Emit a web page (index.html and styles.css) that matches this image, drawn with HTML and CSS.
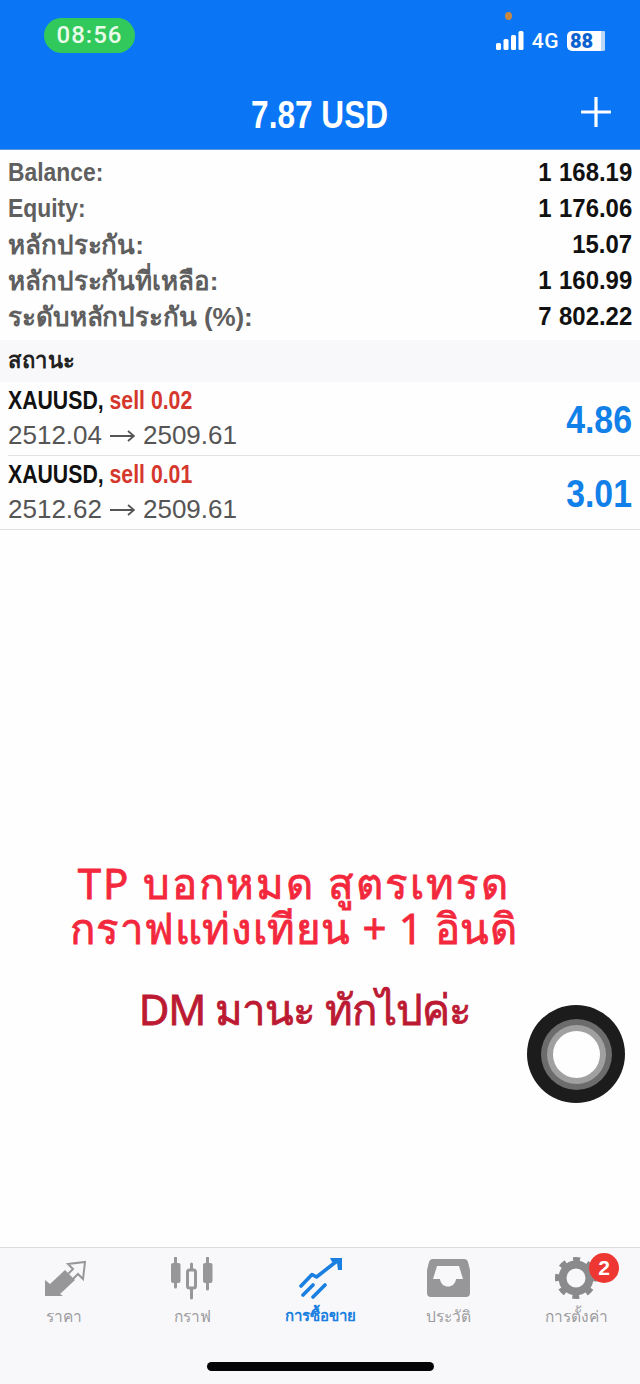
FILE: index.html
```html
<!DOCTYPE html>
<html>

<head>
  <meta charset="utf-8">
  <link rel="stylesheet" href="styles.css">
</head>

<body>
  <div class="screen">
    <header class="top">
      <div class="status">
        <span class="clock">08:56</span>
        <div class="status-right">
          <svg class="signal" viewBox="0 0 28 19">
            <rect x="0" y="12" width="5" height="7" rx="1.5" />
            <rect x="7.5" y="8" width="5" height="11" rx="1.5" />
            <rect x="15" y="4" width="5" height="15" rx="1.5" />
            <rect x="22.5" y="0" width="5" height="19" rx="1.5" />
          </svg>
          <span class="net">4G</span>
          <span class="battery">88</span>
        </div>
      </div>
      <span class="cam-dot"></span>
      <div class="title-row">
        <h1 class="title">7.87 USD</h1>
        <svg class="plus" viewBox="0 0 30 30">
          <path d="M15 1V29M1 15H29" />
        </svg>
      </div>
    </header>

    <section class="account">
      <div class="acc-row"><span class="acc-label">Balance:</span><span class="acc-value">1 168.19</span></div>
      <div class="acc-row"><span class="acc-label">Equity:</span><span class="acc-value">1 176.06</span></div>
      <div class="acc-row"><span class="acc-thai">หลักประกัน:</span><span class="acc-value">15.07</span></div>
      <div class="acc-row"><span class="acc-thai">หลักประกันที่เหลือ:</span><span class="acc-value">1 160.99</span></div>
      <div class="acc-row"><span class="acc-thai">ระดับหลักประกัน (%):</span><span class="acc-value">7 802.22</span></div>
    </section>

    <div class="section-head">สถานะ</div>

    <section class="trades">
      <div class="trade">
        <div class="trade-info">
          <div class="trade-name">XAUUSD, <span class="sell">sell 0.02</span></div>
          <div class="trade-price">2512.04
            <svg class="arrow" viewBox="0 0 25 12"><path d="M0 6H24M18 1L24 6L18 11" /></svg>
            2509.61</div>
        </div>
        <div class="profit">4.86</div>
      </div>
      <div class="trade">
        <div class="trade-info">
          <div class="trade-name">XAUUSD, <span class="sell">sell 0.01</span></div>
          <div class="trade-price">2512.62
            <svg class="arrow" viewBox="0 0 25 12"><path d="M0 6H24M18 1L24 6L18 11" /></svg>
            2509.61</div>
        </div>
        <div class="profit">3.01</div>
      </div>
    </section>

    <main class="blank">
      <p class="promo promo-one">TP บอกหมด สูตรเทรด</p>
      <p class="promo promo-two">กราฟแท่งเทียน + 1 อินดิ</p>
      <p class="promo promo-dm">DM มานะ ทักไปค่ะ</p>
      <div class="assist"><span class="assist-core"></span></div>
    </main>

    <nav class="tabs">
      <div class="tab">
        <svg class="tab-icon" viewBox="0 0 48 44">
          <path class="solid" d="M5 39L5 23L10 27L25 13L35 23L20 37L23 39Z" />
          <path class="line" d="M22 33L38 17L43 22L45 5L28 7L33 12L17 28" />
        </svg>
        <span class="tab-label">ราคา</span>
      </div>
      <div class="tab">
        <svg class="tab-icon" viewBox="0 0 48 44">
          <path class="wick" d="M7.5 1V30M23.5 7V41M39.5 1V32" />
          <rect class="solid" x="3" y="6" width="9.5" height="20" rx="2" />
          <rect class="solid" x="35" y="6" width="9.5" height="20" rx="2" />
          <rect class="hollow" x="19.5" y="13" width="8" height="18" rx="2" />
        </svg>
        <span class="tab-label">กราฟ</span>
      </div>
      <div class="tab tab-active">
        <svg class="tab-icon" viewBox="0 0 48 44">
          <path class="blue" d="M5 29L16 17.5L20.5 20L41 4M7 38L17 28M17 40L29 28" />
          <path class="blue-fill" d="M34 1H46V13L42 13L41 6L36 5Z" />
        </svg>
        <span class="tab-label">การซื้อขาย</span>
      </div>
      <div class="tab">
        <svg class="tab-icon" viewBox="0 0 48 44">
          <path class="solid" d="M9 2H40Q43 2 44 5L46 13V36Q46 40 42 40H7Q3 40 3 36V13L5 5Q6 2 9 2ZM13 9L9 22H16C17 32 31 32 32 22H39L35 9Z" fill-rule="evenodd" />
        </svg>
        <span class="tab-label">ประวัติ</span>
      </div>
      <div class="tab">
        <svg class="tab-icon" viewBox="0 0 48 44">
          <circle class="gear" cx="24" cy="21" r="13.5" />
          <circle class="gear-teeth" cx="24" cy="21" r="18.5" />
        </svg>
        <span class="tab-label">การตั้งค่า</span>
        <span class="badge">2</span>
      </div>
      <span class="home-bar"></span>
    </nav>
  </div>
</body>

</html>
```

FILE: styles.css
```css
* {
  margin: 0;
  padding: 0;
  box-sizing: border-box;
}

body {
  background: #fefefe;
  font-family: "Liberation Sans", "Noto Sans", sans-serif;
  overflow: hidden;
}

.screen {
  position: relative;
  width: 640px;
  height: 1384px;
  display: flex;
  flex-direction: column;
}

.top {
  position: relative;
  height: 150px;
  background: #0a76f6;
  border-bottom: 1px solid #5b97dc;
  color: #fff;
  display: flex;
  flex-direction: column;
}

.status {
  display: flex;
  justify-content: space-between;
  align-items: center;
  padding: 18px 32px 0 44px;
}

.clock {
  width: 91px;
  height: 35px;
  border-radius: 18px;
  background: #32c95c;
  color: #e9fbe9;
  font-family: "Roboto", sans-serif;
  font-size: 24px;
  font-weight: 500;
  letter-spacing: 1px;
  text-align: center;
  line-height: 35px;
}

.status-right {
  display: flex;
  align-items: center;
  gap: 8px;
  margin-top: 10px;
}

.signal {
  width: 28px;
  height: 19px;
  fill: #fff;
}

.net {
  font-family: "Roboto", sans-serif;
  font-size: 21px;
  font-weight: 500;
  letter-spacing: .5px;
}

.battery {
  width: 41px;
  height: 20px;
  border-radius: 5px;
  background: linear-gradient(90deg, #fbfdff 82%, #bcd6f5 82%, #bcd6f5 92%, transparent 92%);
  color: #0a62d0;
  font-family: "Roboto", sans-serif;
  font-size: 20px;
  font-weight: 900;
  padding-left: 3px;
  line-height: 20px;
}

.cam-dot {
  position: absolute;
  left: 505px;
  top: 12px;
  width: 7px;
  height: 8px;
  border-radius: 50%;
  background: #c8873f;
}

.title-row {
  position: relative;
  flex: 1;
  display: flex;
  justify-content: center;
  align-items: center;
  padding-top: 27px;
}

.title {
  font-size: 39px;
  font-weight: 700;
  white-space: nowrap;
  transform: scaleX(.81);
}

.plus {
  position: absolute;
  right: 28px;
  top: 43px;
  width: 32px;
  height: 32px;
  fill: none;
  stroke: #fff;
  stroke-width: 3;
}

.account {
  height: 190px;
  padding: 4px 8px 0;
  background: #fefefe;
}

.acc-row {
  height: 36px;
  display: flex;
  justify-content: space-between;
  align-items: center;
  font-size: 26px;
  font-weight: 700;
}

.acc-label {
  color: #5f5f5f;
  transform: scaleX(.88);
  transform-origin: left center;
}

.acc-thai {
  color: #5f5f5f;
  letter-spacing: -.1px;
}

.acc-value {
  color: #111;
  word-spacing: 1px;
  transform: scaleX(.92);
  transform-origin: right center;
}

.section-head {
  height: 42px;
  padding: 0 8px;
  background: #f8f8fa;
  color: #222;
  font-size: 22px;
  font-weight: 700;
  letter-spacing: .5px;
  line-height: 42px;
}

.trade {
  height: 74px;
  margin-left: 8px;
  padding-right: 8px;
  border-bottom: 1px solid #e2e2e4;
  display: flex;
  justify-content: space-between;
  align-items: center;
}

.trade:last-child {
  margin-left: 0;
  padding-left: 8px;
}

.trade-name {
  color: #111;
  font-size: 25px;
  font-weight: 700;
  white-space: nowrap;
  transform: scaleX(.85);
  transform-origin: left center;
}

.sell {
  color: #d5372d;
}

.trade-price {
  display: flex;
  align-items: center;
  gap: 8px;
  margin-top: 5px;
  color: #555;
  font-size: 26px;
}

.arrow {
  width: 25px;
  height: 12px;
  fill: none;
  stroke: #555;
  stroke-width: 1.8;
}

.profit {
  padding-top: 4px;
  color: #1180e8;
  font-size: 38px;
  font-weight: 700;
  transform: scaleX(.89);
  transform-origin: right center;
}

.blank {
  position: relative;
  flex: 1;
  display: flex;
  flex-direction: column;
  align-items: center;
  padding: 330px 52px 0 0;
  font-family: "Noto Sans", sans-serif;
}

.promo {
  color: #f3283c;
  font-size: 42px;
  line-height: 45px;
  text-align: center;
  white-space: nowrap;
  -webkit-text-stroke: .8px currentColor;
}

.promo-one {
  letter-spacing: 2px;
}

.promo-two {
  letter-spacing: .6px;
}

.promo-dm {
  margin: 36px 0 0 22px;
  color: #bc1a33;
  letter-spacing: -1px;
}

.assist {
  position: absolute;
  left: 527px;
  top: 475px;
  width: 98px;
  height: 98px;
  border-radius: 50%;
  background: #1c1c1c;
  display: flex;
  justify-content: center;
  align-items: center;
}

.assist-core {
  width: 47px;
  height: 47px;
  border-radius: 50%;
  background: #fefefe;
  box-shadow: 0 0 0 6px #a0a0a0, 0 0 0 12px #6c6c6c;
}

.tabs {
  position: relative;
  height: 137px;
  background: #f8f8fa;
  border-top: 1px solid #dcdcde;
  display: grid;
  grid-template-columns: repeat(5, 128px);
  align-content: start;
  padding-top: 9px;
}

.tab {
  position: relative;
  display: flex;
  flex-direction: column;
  align-items: center;
  gap: 3px;
  color: #9c9c9e;
  font-size: 15.5px;
}

.tab-active {
  color: #1a7fe0;
  font-weight: 700;
  font-size: 15px;
}

.tab-icon {
  width: 48px;
  height: 44px;
}

.solid {
  fill: #979799;
}

.line {
  fill: none;
  stroke: #979799;
  stroke-width: 2;
}

.wick {
  fill: none;
  stroke: #979799;
  stroke-width: 3;
  stroke-linecap: round;
}

.hollow {
  fill: #f8f8fa;
  stroke: #979799;
  stroke-width: 3;
}

.blue {
  fill: none;
  stroke: #1a7fe0;
  stroke-width: 3.6;
  stroke-linecap: round;
  stroke-linejoin: round;
}

.blue-fill {
  fill: #1a7fe0;
}

.gear {
  fill: none;
  stroke: #8a8a8c;
  stroke-width: 8;
}

.gear-teeth {
  fill: none;
  stroke: #8a8a8c;
  stroke-width: 5;
  stroke-dasharray: 7 7.53;
  stroke-dashoffset: 3.5;
}

.badge {
  position: absolute;
  left: 77px;
  top: -4px;
  width: 30px;
  height: 30px;
  border-radius: 50%;
  background: #ee3732;
  color: #fff;
  font-family: "Liberation Sans", sans-serif;
  font-size: 21px;
  font-weight: 700;
  text-align: center;
  line-height: 30px;
}

.home-bar {
  position: absolute;
  left: 207px;
  bottom: 13px;
  width: 227px;
  height: 9px;
  border-radius: 5px;
  background: #050505;
}
```
